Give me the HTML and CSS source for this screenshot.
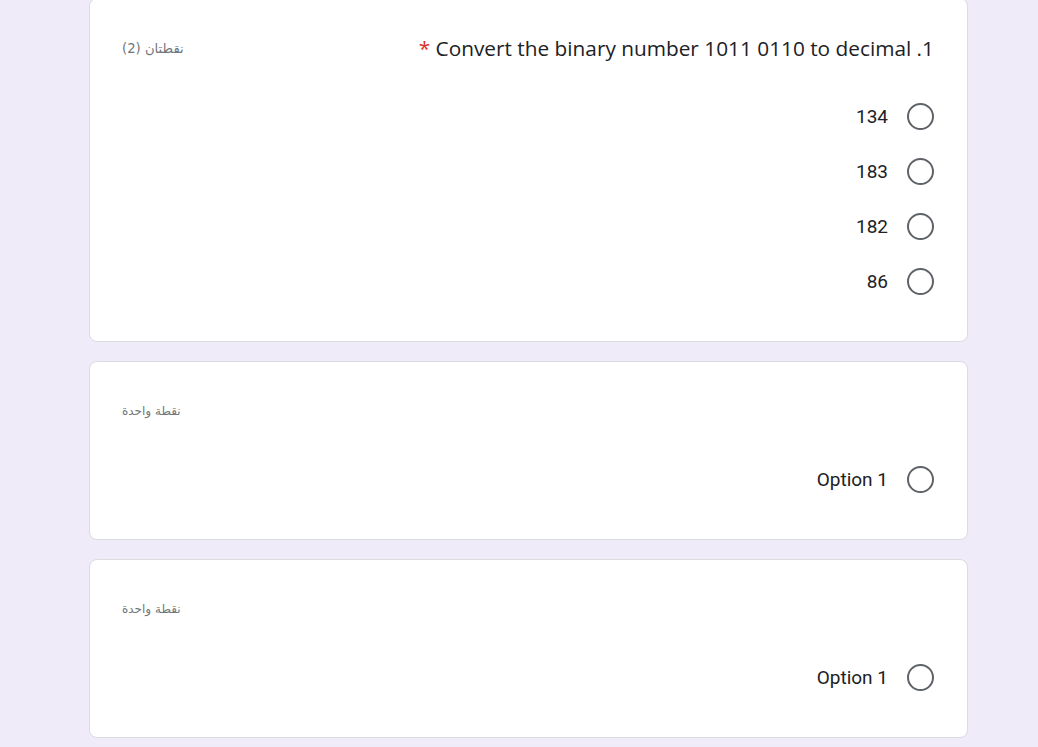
FILE: index.html
```html
<!DOCTYPE html>
<html lang="ar" dir="rtl">
<head>
<meta charset="utf-8">
<link rel="stylesheet" href="styles.css">
</head>
<body>
<div class="page">
  <div class="card">
    <div class="head">
      <div class="title">1. Convert the binary number 1011 0110 to decimal <span class="req">*</span></div>
      <div class="points">نقطتان (2)</div>
    </div>
    <div class="options">
      <div class="opt"><span class="radio"></span><span class="label">134</span></div>
      <div class="opt"><span class="radio"></span><span class="label">183</span></div>
      <div class="opt"><span class="radio"></span><span class="label">182</span></div>
      <div class="opt"><span class="radio"></span><span class="label">86</span></div>
    </div>
  </div>
  <div class="card">
    <div class="head">
      <div class="title"></div>
      <div class="points small">نقطة واحدة</div>
    </div>
    <div class="options">
      <div class="opt"><span class="radio"></span><span class="label">Option 1</span></div>
    </div>
  </div>
  <div class="card">
    <div class="head">
      <div class="title"></div>
      <div class="points small">نقطة واحدة</div>
    </div>
    <div class="options">
      <div class="opt"><span class="radio"></span><span class="label">Option 1</span></div>
    </div>
  </div>
</div>
</body>
</html>
```
FILE: styles.css
```css
html, body {
  margin: 0;
  padding: 0;
  background: #f0ebf8;
  height: 100%;
  overflow: hidden;
}
body {
  font-family: Roboto, "DejaVu Sans", sans-serif;
}
.page {
  direction: ltr;
  padding-left: 89px;
  margin-top: -2px;
}
.card {
  direction: rtl;
  box-sizing: border-box;
  width: 879px;
  background: #fff;
  border: 1px solid #dadce0;
  border-radius: 8px;
  padding: 37px 33px 32px 32px;
  margin-bottom: 19px;
}
.head {
  display: flex;
  justify-content: space-between;
  align-items: center;
  height: 24px;
}
.title {
  font-family: "Open Sans", sans-serif;
  font-size: 20.8px;
  color: #202124;
  white-space: nowrap;
}
.req {
  color: #d93025;
}
.points {
  font-family: "DejaVu Sans", sans-serif;
  font-size: 13.2px;
  color: #70757a;
}
.points.small {
  font-size: 12px;
}
.options {
  margin-top: 29px;
  display: flex;
  flex-direction: column;
}
.opt {
  height: 55px;
  display: flex;
  align-items: center;
  gap: 19px;
}
.radio {
  box-sizing: border-box;
  width: 27px;
  height: 27px;
  border: 2.5px solid #5f6368;
  border-radius: 50%;
}
.label {
  font-family: Roboto, sans-serif;
  font-size: 19px;
  color: #202124;
}
```
